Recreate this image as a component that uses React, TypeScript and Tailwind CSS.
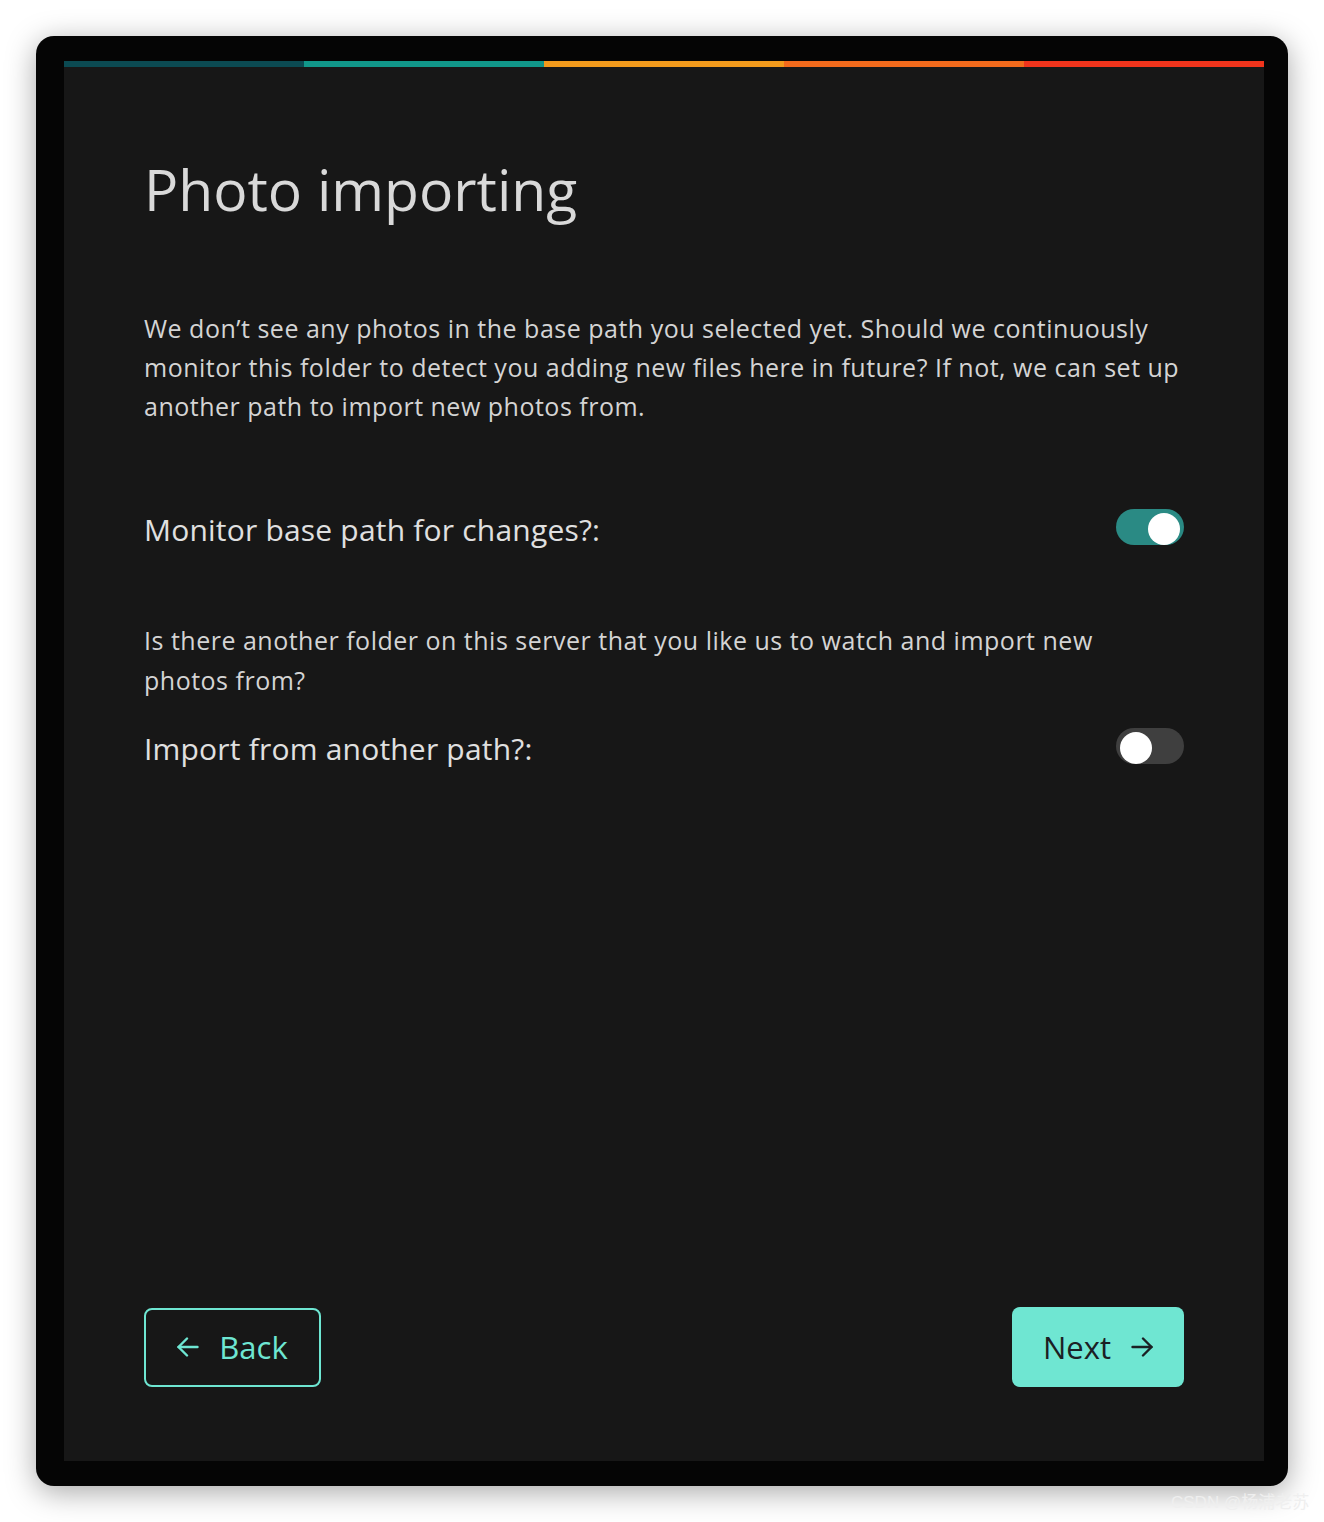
function Toggle({ on }: { on: boolean }) {
  return (
    <div
      className={
        on
          ? "mb-[6px] w-[68px] h-[36px] rounded-full bg-[#2a8a84] flex items-end justify-end px-[4px]"
          : "mb-[6px] w-[68px] h-[36px] rounded-full bg-[#3f3f3f] flex items-end justify-start px-[4px]"
      }
    >
      <div className="w-[32px] h-[32px] rounded-full bg-white" />
    </div>
  );
}

function Arrow({ dir }: { dir: "left" | "right" }) {
  return (
    <svg
      width="22"
      height="20"
      viewBox="0 0 22 20"
      fill="none"
      stroke="currentColor"
      strokeWidth="2.4"
      strokeLinecap="round"
      strokeLinejoin="round"
      className={dir === "right" ? "rotate-180" : ""}
    >
      <path d="M20.5 10H1.5" />
      <path d="M10 1.5 1.5 10 10 18.5" />
    </svg>
  );
}

export default function App() {
  return (
    <div className="w-[1324px] h-[1522px] bg-white relative font-['Open_Sans',sans-serif]">
      <div className="absolute left-[36px] top-[36px] w-[1252px] h-[1450px] rounded-[18px] bg-[#050505] shadow-[0_6px_30px_rgba(0,0,0,0.35)] pt-[25px] pl-[28px] pr-[24px]">
        <div className="h-[1400px] bg-[#171717] flex flex-col">
          <div className="flex h-[6px]">
            <div className="flex-1 bg-[#0b4a52]" />
            <div className="flex-1 bg-[#11978a]" />
            <div className="flex-1 bg-[#f29a1c]" />
            <div className="flex-1 bg-[#f26a1c]" />
            <div className="flex-1 bg-[#f0341c]" />
          </div>

          <div className="flex-1 flex flex-col px-[80px] pb-[74px]">
            <h1 className="mt-[84px] text-[57px] leading-[76px] text-[#d9d9d9]">Photo importing</h1>

            <p className="mt-[82px] text-[25px] leading-[39px] tracking-[0.5px] text-[#d4d4d4] whitespace-nowrap">
              We don’t see any photos in the base path you selected yet. Should we continuously
              <br />
              monitor this folder to detect you adding new files here in future? If not, we can set up
              <br />
              another path to import new photos from.
            </p>

            <div className="mt-[82px] flex items-center justify-between">
              <span className="text-[30px] leading-[44px] tracking-[0.2px] text-[#e0e0e0]">
                Monitor base path for changes?:
              </span>
              <Toggle on />
            </div>

            <p className="mt-[68px] text-[25px] leading-[40px] tracking-[0.5px] text-[#d4d4d4] whitespace-nowrap">
              Is there another folder on this server that you like us to watch and import new
              <br />
              photos from?
            </p>

            <div className="mt-[27px] flex items-center justify-between">
              <span className="text-[30px] leading-[44px] tracking-[0.2px] text-[#e0e0e0]">
                Import from another path?:
              </span>
              <Toggle on={false} />
            </div>

            <div className="mt-auto flex items-center justify-between">
              <button className="w-[177px] h-[79px] rounded-[8px] border-2 border-[#6ee6d2] flex items-center justify-center gap-[20px] text-[#6ee6d2] text-[31px]">
                <Arrow dir="left" />
                <span>Back</span>
              </button>
              <button className="w-[172px] h-[80px] rounded-[8px] bg-[#6fe6d2] flex items-center justify-center gap-[20px] text-[#1b2024] text-[31px]">
                <span>Next</span>
                <Arrow dir="right" />
              </button>
            </div>
          </div>
        </div>
      </div>
      <div className="absolute left-[1171px] top-[1490px] text-[17px] text-[#efefef] font-['Liberation_Sans','Noto_Sans_CJK_SC',sans-serif]">
        CSDN @杨浦老苏
      </div>
    </div>
  );
}
